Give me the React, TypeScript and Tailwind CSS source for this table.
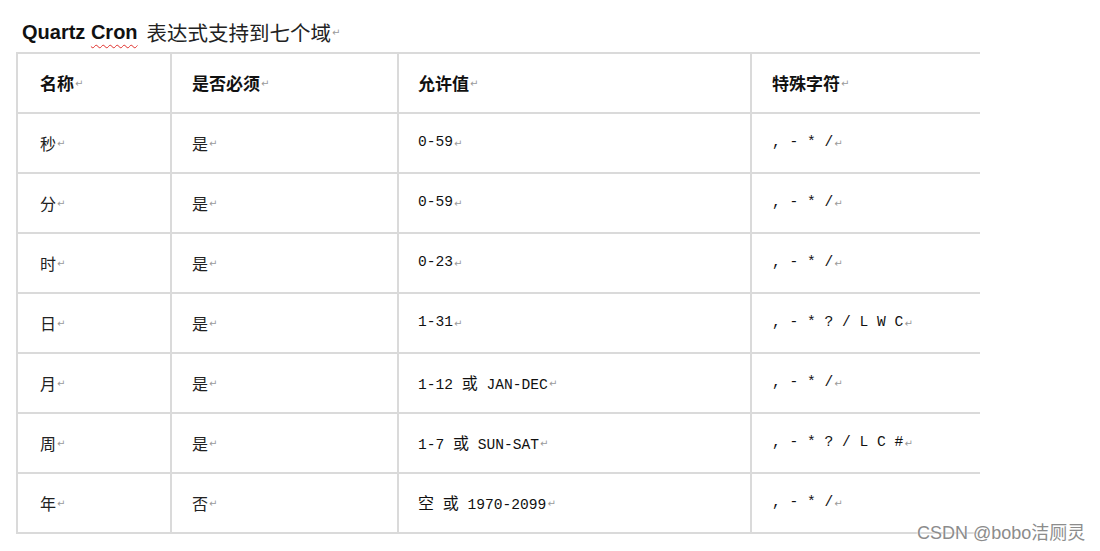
import React from "react";

const cjk = '"Noto Sans CJK SC", "Noto Sans", sans-serif';
const mono = '"Liberation Mono", "Noto Sans CJK SC", monospace';

const rows: string[][] = [
  ["秒", "是", "0-59", ", - * /"],
  ["分", "是", "0-59", ", - * /"],
  ["时", "是", "0-23", ", - * /"],
  ["日", "是", "1-31", ", - * ? / L W C"],
  ["月", "是", "1-12 或 JAN-DEC", ", - * /"],
  ["周", "是", "1-7 或 SUN-SAT", ", - * ? / L C #"],
  ["年", "否", "空 或 1970-2099", ", - * /"],
];

const widths = ["w-[154px] pl-[22px]", "w-[227px] pl-[20px]", "w-[353px] pl-[19px]", "w-[228px] pl-[20px]"];

function Mark() {
  return <span className="ml-[1px] font-['DejaVu_Sans'] text-[10px] font-normal text-[#9a9a9a]">↵</span>;
}

// mixed cells: latin in mono, chinese bigger
function Mixed({ text }: { text: string }) {
  const parts = text.split(/([\u4e00-\u9fff]+)/);
  return (
    <span className="whitespace-pre text-[14.6px] text-[#111]" style={{ fontFamily: mono }}>
      {parts.map((p, i) =>
        /[\u4e00-\u9fff]/.test(p) ? (
          <span key={i} className="text-[16px]" style={{ fontFamily: cjk }}>
            {p}
          </span>
        ) : (
          <span key={i}>{p}</span>
        )
      )}
    </span>
  );
}

function Cell({ col, last, children }: { col: number; last: boolean; children: React.ReactNode }) {
  return (
    <div
      className={`${widths[col]} flex h-[60px] items-center border-b-2 border-[#dadada] ${
        last ? "" : "border-r-2"
      }`}
    >
      {children}
    </div>
  );
}

export default function App() {
  return (
    <div className="relative h-[551px] w-[1100px] overflow-hidden bg-white">
      <div className="flex h-[52px] items-center pl-[22px] pt-[12px]">
        <span className="font-['Liberation_Sans'] text-[20px] font-bold text-[#111]">
          Quartz{" "}
          <span className="underline decoration-[#e0302c] decoration-wavy decoration-1 underline-offset-[5px]">
            Cron
          </span>
        </span>
        <span className="ml-[9px] text-[20.5px] text-[#222]" style={{ fontFamily: cjk }}>
          表达式支持到七个域
        </span>
        <Mark />
      </div>

      <div className="ml-[16px] w-[964px] border-l-2 border-t-2 border-[#dadada]">
        <div className="flex">
          {["名称", "是否必须", "允许值", "特殊字符"].map((h, i) => (
            <Cell key={h} col={i} last={i === 3}>
              <span className="text-[17px] font-bold text-[#111]" style={{ fontFamily: cjk }}>
                {h}
              </span>
              <Mark />
            </Cell>
          ))}
        </div>
        {rows.map((r) => (
          <div key={r[0]} className="flex">
            {r.map((v, i) => (
              <Cell key={i} col={i} last={i === 3}>
                {i < 2 ? (
                  <span className="text-[16px] text-[#222]" style={{ fontFamily: cjk }}>
                    {v}
                  </span>
                ) : (
                  <Mixed text={v} />
                )}
                <Mark />
              </Cell>
            ))}
          </div>
        ))}
      </div>

      <div
        className="absolute left-[917px] top-[519px] font-['Liberation_Sans'] text-[18px] leading-[24px] text-[#8c8c8c] [text-shadow:0_0_2px_#fff,0_0_2px_#fff]"
      >
        CSDN @bobo<span style={{ fontFamily: cjk }}>洁厕灵</span>
      </div>
    </div>
  );
}
